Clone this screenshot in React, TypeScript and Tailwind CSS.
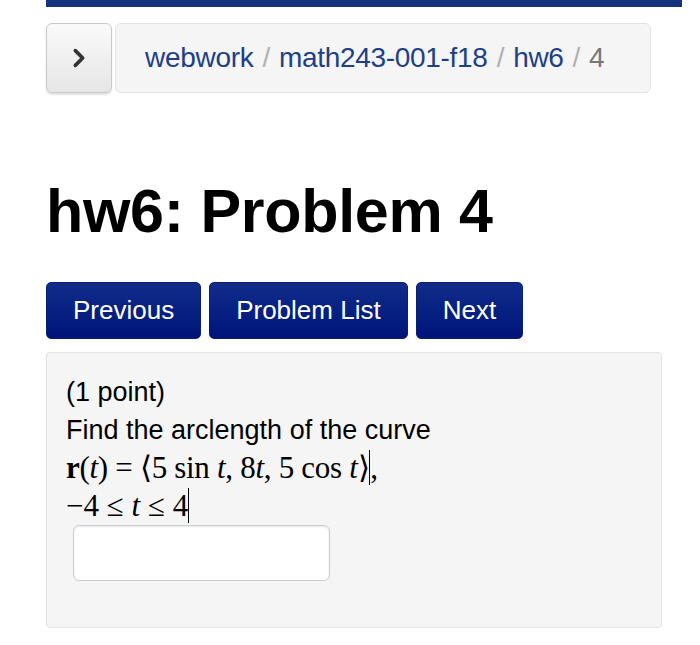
export default function App() {
  return (
    <div className="min-h-[645px] w-[700px] bg-white font-['Liberation_Sans',Arial,sans-serif]">
      <div className="ml-[46px] w-[636px]">
        {/* Top bar */}
        <div className="h-[7px] bg-[#15337f]" />

        {/* Breadcrumb row */}
        <div className="mt-[16px] flex h-[70px] w-[605px] gap-[3px]">
          <button className="flex w-[66px] items-center justify-center rounded-[6px] border border-[#c8c8c8] bg-gradient-to-b from-[#fafafa] to-[#e6e6e6] shadow-[0_2px_2px_rgba(0,0,0,0.12)]">
            <svg className="h-[22px] w-[22px] text-[#333]" viewBox="0 0 24 24" fill="none" stroke="currentColor" strokeWidth={4} strokeLinecap="round" strokeLinejoin="round">
              <path d="M8 4l8 8-8 8" />
            </svg>
          </button>
          <div className="flex flex-1 items-center rounded-[6px] border border-[#e3e3e3] bg-[#f5f5f5] pl-[29px] text-[28px] tracking-[-0.3px]">
            <span className="text-[#213f85]">webwork</span>
            <span className="px-[9px] text-[#b0b0b0]">/</span>
            <span className="text-[#213f85]">math243-001-f18</span>
            <span className="px-[9px] text-[#b0b0b0]">/</span>
            <span className="text-[#213f85]">hw6</span>
            <span className="px-[9px] text-[#b0b0b0]">/</span>
            <span className="text-[#777]">4</span>
          </div>
        </div>

        {/* Heading */}
        <h1 className="mt-[83px] text-[61px] font-bold leading-[70px] tracking-[-0.3px] text-black">
          hw6: Problem 4
        </h1>

        {/* Nav buttons */}
        <div className="mt-[36px] flex gap-[8px]">
          {["Previous", "Problem List", "Next"].map((label) => (
            <button
              key={label}
              className="h-[57px] rounded-[5px] border border-[#0a1f6e] bg-gradient-to-b from-[#122c8a] to-[#00137a] px-[26px] text-[26px] text-white"
            >
              {label}
            </button>
          ))}
        </div>

        {/* Problem well */}
        <div className="mt-[13px] h-[276px] w-[616px] rounded-[4px] border border-[#e3e3e3] bg-[#f5f5f5] pl-[19px] pt-[20px] text-[27px] leading-[38px] text-black">
          <p>(1 point)</p>
          <p>Find the arclength of the curve</p>
          <p className="font-['Liberation_Serif','Times_New_Roman',serif] text-[31px] leading-[38px] tracking-[-0.3px]">
            <span className="font-bold">r</span>(<i>t</i>) = ⟨5 sin <i>t</i>, 8<i>t</i>, 5 cos <i>t</i>⟩<span className="border-l border-black" />,
          </p>
          <p className="font-['Liberation_Serif','Times_New_Roman',serif] text-[31px] leading-[38px]">
            −4 ≤ <i>t</i> ≤ 4<span className="border-l border-black" />
          </p>
          <input
            className="ml-[7px] h-[56px] w-[257px] rounded-[6px] border border-[#cccccc] bg-white shadow-[inset_0_1px_2px_rgba(0,0,0,0.1)] outline-none"
          />
        </div>
      </div>
    </div>
  );
}
